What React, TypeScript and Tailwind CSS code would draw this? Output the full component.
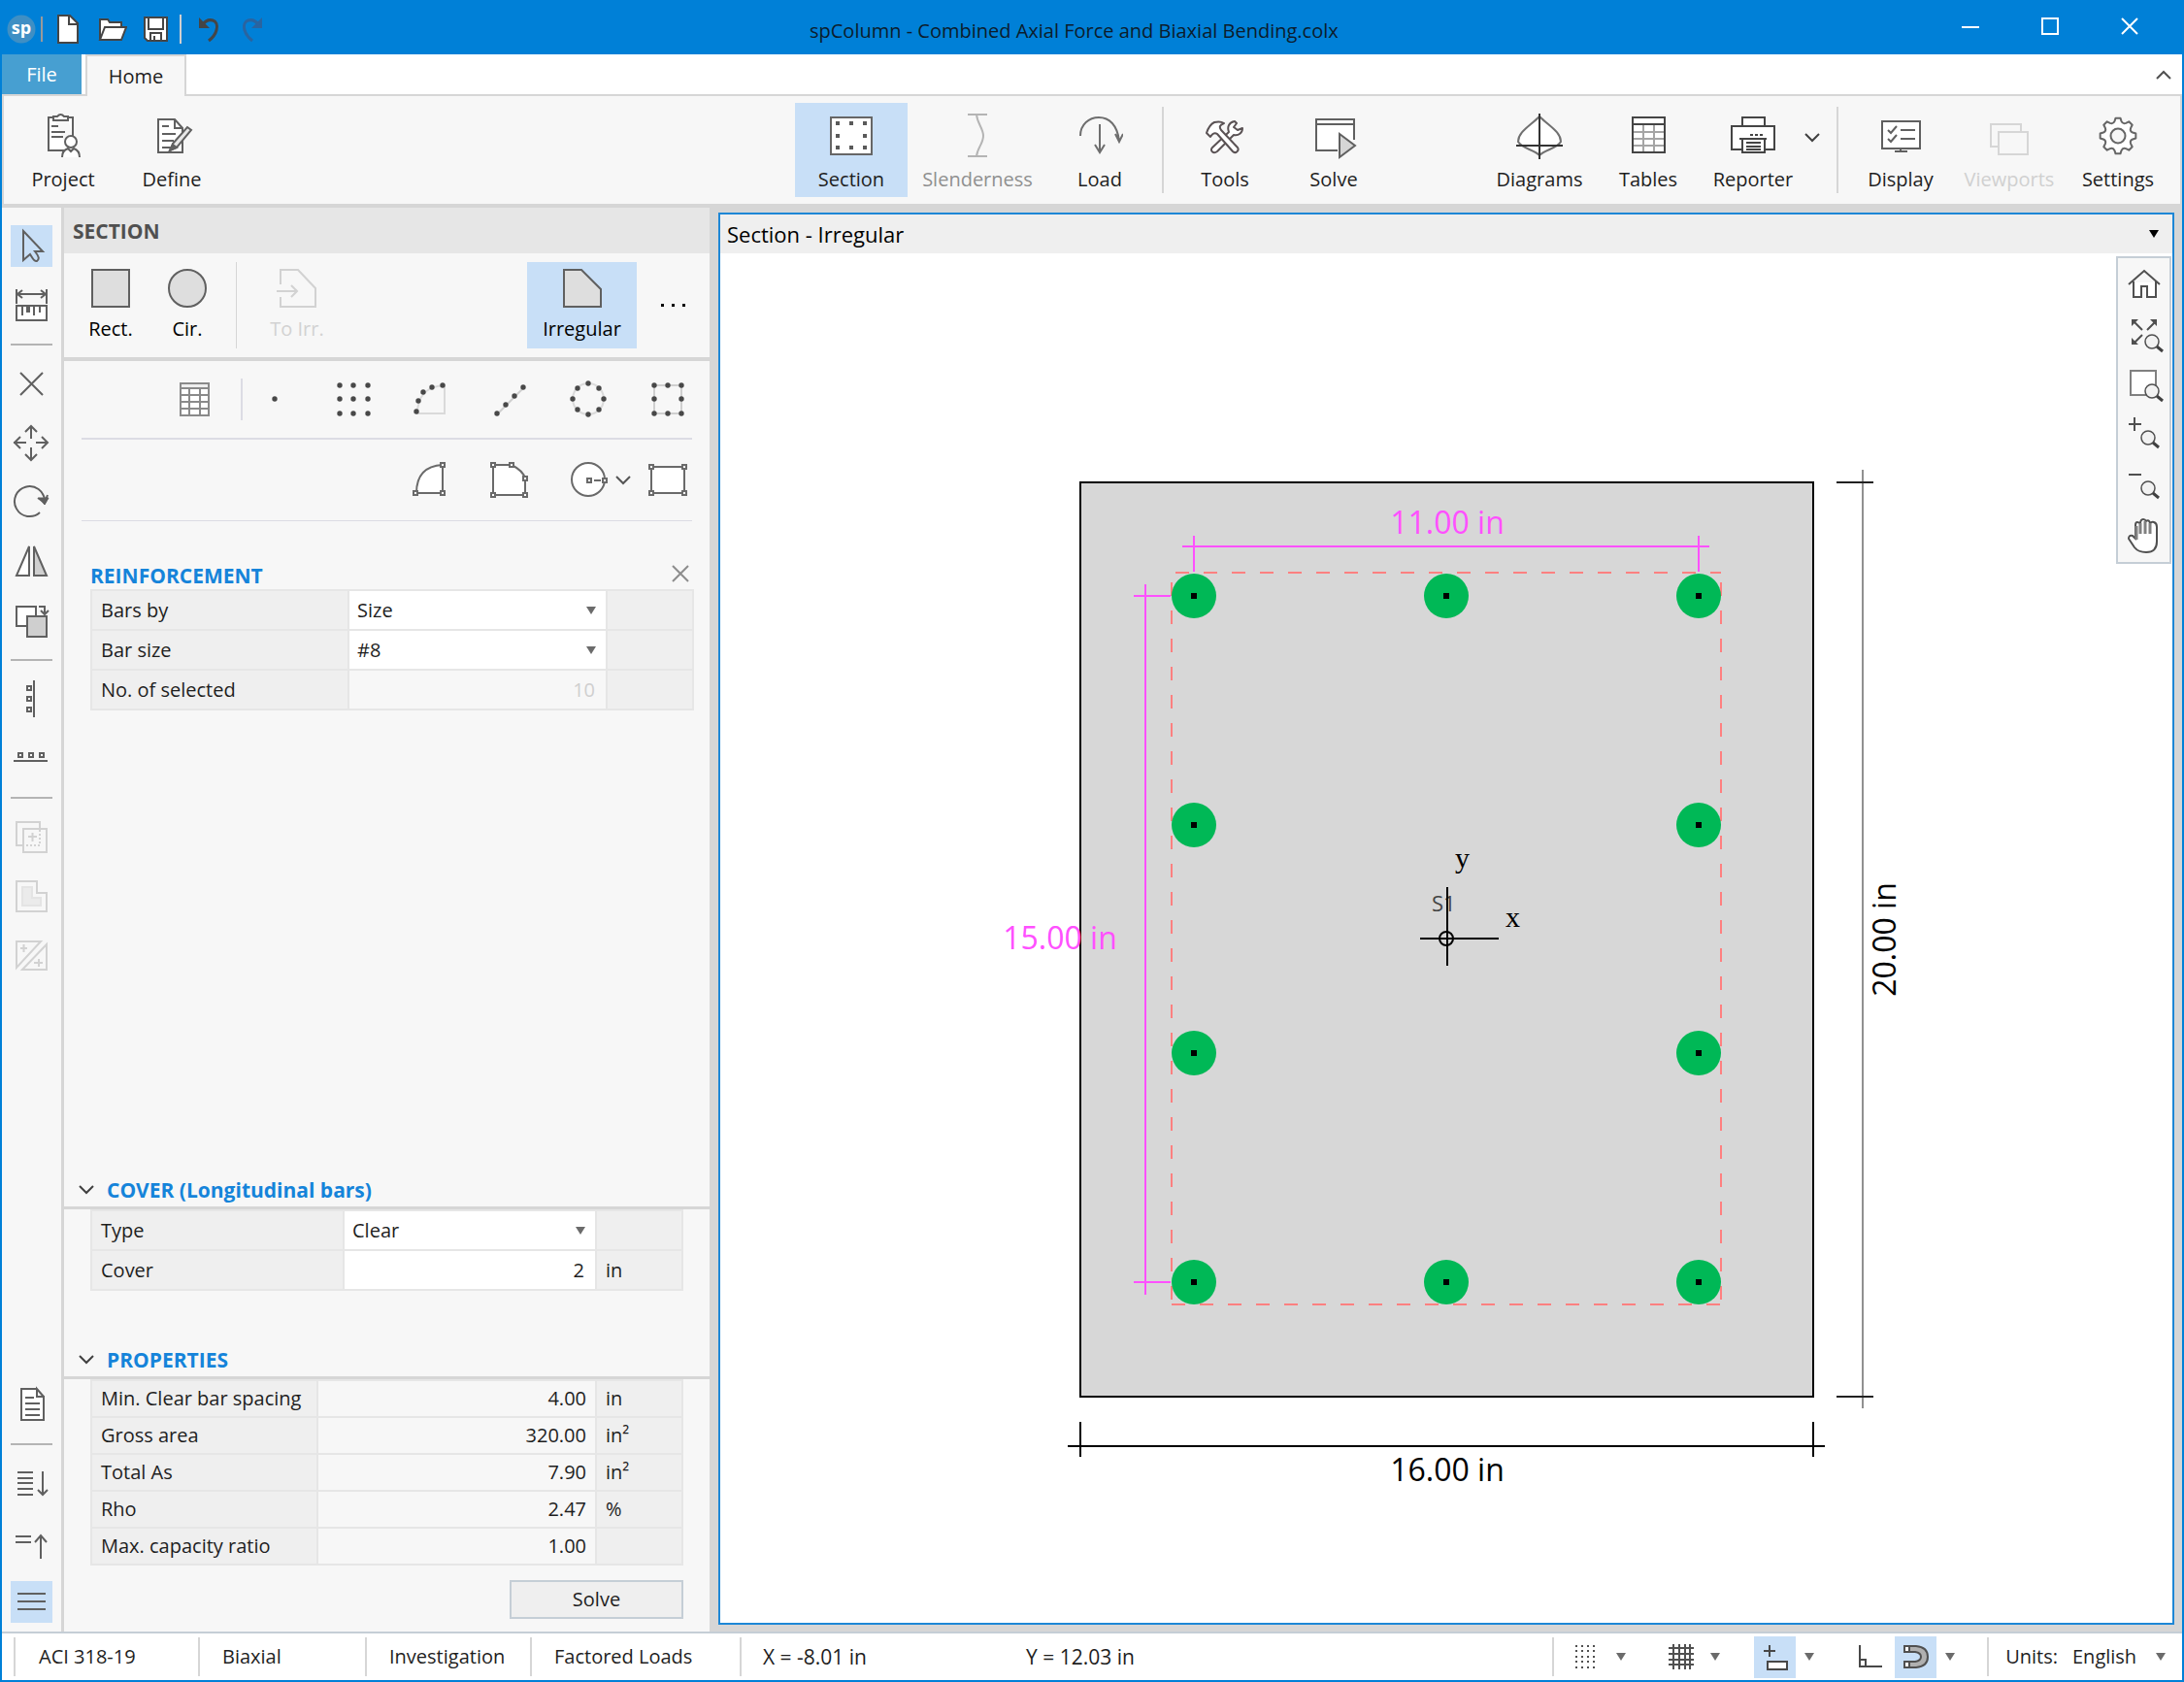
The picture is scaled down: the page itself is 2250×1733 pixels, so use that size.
import React from "react";

type IconProps = { w?: number; h?: number; c?: string; sw?: number; children: React.ReactNode };

function Ic({ w = 48, h = 48, c = "#606060", sw = 2, children }: IconProps) {
  return (
    <svg width={w} height={h} viewBox={`0 0 ${w} ${h}`} fill="none" stroke={c} strokeWidth={sw} aria-hidden="true" className="block shrink-0">
      {children}
    </svg>
  );
}

function Triangle({ c = "#6b6b6b" }: { c?: string }) {
  return (
    <svg width="12" height="8" viewBox="0 0 12 8" fill={c} aria-hidden="true" className="pointer-events-none block shrink-0">
      <path d="M1 0H11L6 8Z" />
    </svg>
  );
}

function Chevron({ c = "#404040", up = false }: { c?: string; up?: boolean }) {
  return (
    <Ic w={16} h={12} c={c}>
      {up ? <path d="M1 10L8 3L15 10" /> : <path d="M1 2L8 9L15 2" />}
    </Ic>
  );
}

const gearPath = (() => {
  const pts: string[] = [];
  const n = 8;
  const at = (r: number, a: number) => `${(24 + r * Math.cos(a)).toFixed(2)} ${(24 + r * Math.sin(a)).toFixed(2)}`;
  for (let i = 0; i < n; i++) {
    const a = (i * 2 * Math.PI) / n - Math.PI / 2;
    const s = Math.PI / n;
    pts.push(`${i === 0 ? "M" : "L"}${at(18.5, a - s * 0.34)}`);
    pts.push(`L${at(18.5, a + s * 0.34)}`);
    pts.push(`L${at(15.5, a + s * 0.58)}`);
    pts.push(`Q${at(12.8, a + s)} ${at(15.5, a + s * 1.42)}`);
  }
  return pts.join("") + "Z";
})();

/* ---------- ribbon icons ---------- */

const ProjectIcon = (
  <Ic>
    <path d="M29 39H9V5H14M29 5H34V26" fill="#fff" />
    <path d="M14 8V4H18Q21.500 0 25 4H29V8Z" fill="#fff" />
    <path d="M12 14H19M12 20H26M12 25H24" />
    <circle cx="32" cy="30" r="6" fill="#fff" />
    <path d="M23 46C23 40 26 38 29 37L32 40L35 37C38 38 41 40 41 46" fill="#fff" />
  </Ic>
);

const DefineIcon = (
  <Ic>
    <path d="M27 7H10V41H35V16Z" fill="#fff" />
    <path d="M27 7V16H35" />
    <path d="M14 14H21M14 22H28M14 29H26M14 36H24" />
    <path d="M25 32L40 15L44 18L29 36L22 39Z" fill="#e8e8e8" />
    <path d="M22 39L25 33L29 36Z" fill="#606060" />
  </Ic>
);

const SectionIcon = (
  <Ic c="#666">
    <rect x="3" y="5" width="42" height="38" fill="#fff" />
    <g fill="#5a5a5a" stroke="none">
      {[10, 24, 38].map((x) => [11, 24, 36].map((y) => (x === 24 && y === 24 ? null : <rect key={`${x}-${y}`} x={x - 2} y={y - 2} width="4" height="4" />)))}
    </g>
  </Ic>
);

const SlendernessIcon = (
  <Ic c="#b4b4b4">
    <path d="M14 2H34M14 45H34M23 2C24 12 30 16 30 24C30 32 24 36 23 45" />
  </Ic>
);

const LoadIcon = (
  <Ic c="#6e6e6e">
    <path d="M4 24C4 12 13 5 23 5C34 5 42 13 44 29M40 22L44 30L48 22M24 12V41M19 33L24 41L29 33" />
  </Ic>
);

const ToolsIcon = (
  <Ic c="#5a5254">
    <path d="M11 36L28 20C26 15 28 10 34 9L36 11L33 15L37 18L42 16C42 21 38 24 33 23L16 40C12 43 8 39 11 36Z" fill="#fff" strokeLinejoin="round" />
    <path d="M5 21C7 15 9 12 13 10C17 9 20 9 23 11C18 13 18 15 20 18L37 36C39 39 35 43 32 40L16 22C13 20 11 22 9 25Z" fill="#fff" strokeLinejoin="round" />
  </Ic>
);

const SolveIcon = (
  <Ic c="#606060">
    <path d="M28 39H6V7H45V28" fill="#fff" />
    <path d="M6 12H45M45 7V28" />
    <path d="M30 22V46L46 34Z" fill="#d6d6d6" />
  </Ic>
);

const DiagramsIcon = (
  <Ic c="#707070">
    <path d="M24 4C14 14 2 20 2 30C6 37 18 38 24 44C30 38 42 37 46 30C46 20 34 14 24 4Z" fill="#fff" />
    <path d="M24 1V48M0 34H48" stroke="#333" />
  </Ic>
);

const TablesIcon = (
  <Ic c="#454545">
    <rect x="8" y="5" width="33" height="36" fill="#fff" />
    <path d="M9 20H40M9 27H40M9 34H40M19 13V40M30 13V40" stroke="#a5a5a5" />
    <path d="M8 12H41" />
    <rect x="8" y="5" width="33" height="36" />
  </Ic>
);

const ReporterIcon = (
  <Ic c="#454545">
    <rect x="13" y="5" width="23" height="9" fill="#fff" />
    <path d="M12 38H2V14H46V38H36" fill="#fff" />
    <path d="M21 23H24M26 23H29M31 23H34M10 27H38" />
    <rect x="13" y="27" width="23" height="14" fill="#fff" />
    <path d="M17 31H32M17 35H32M17 38H32" />
  </Ic>
);

const DisplayIcon = (
  <Ic c="#606060">
    <rect x="5" y="9" width="39" height="28" fill="#fff" />
    <path d="M18 40H31M24 37V40" />
    <path d="M24 18H39M24 27H39M11 18L14 21L20 14M11 27L14 30L20 23" />
  </Ic>
);

const ViewportsIcon = (
  <Ic c="#d6d6d6">
    <path d="M13 35H5V12H36V20" />
    <rect x="13" y="20" width="30" height="23" />
  </Ic>
);

const SettingsIcon = (
  <Ic c="#666">
    <path d={gearPath} fill="#fff" strokeLinejoin="round" />
    <circle cx="24" cy="24" r="7.500" fill="#f7f7f7" />
  </Ic>
);

/* ---------- left tool strip icons (43 x 43) ---------- */

const T = ({ c, children }: { c?: string; children: React.ReactNode }) => (
  <Ic w={43} h={43} c={c}>
    {children}
  </Ic>
);

const SelectIcon = (
  <T>
    <path d="M13 6L33 27H25C29 32 30 35 27 37C24 38 22 33 20 30L13 36Z" />
  </T>
);
const MeasureIcon = (
  <T>
    <rect x="6" y="22" width="31" height="15" fill="#fff" />
    <path d="M6 5V20M37 5V20M7 10H36M12 6L7 10L12 14M31 6L36 10L31 14M12 23V32M24 23V32M30 23V29" />
    <path d="M18 23V29" strokeWidth="4" />
  </T>
);
const DeleteIcon = (
  <T>
    <path d="M10 10L33 33M33 10L10 33" />
  </T>
);
const MoveIcon = (
  <T>
    <path d="M21 4V17M15 10L21 4L27 10M21 26V39M15 33L21 39L27 33M3 21H16M10 15L4 21L10 27M26 21H38M32 15L38 21L32 27" />
  </T>
);
const RotateIcon = (
  <T>
    <path d="M30 32A15.500 15.500 0 1 1 35 20M28 17L35 22L38 14" />
    <path d="M29 17L35 24L39 17Z" fill="#606060" strokeWidth="1" />
  </T>
);
const MirrorIcon = (
  <T>
    <path d="M19 6V36H6Z" fill="#fff" />
    <path d="M24 6V36H37Z" fill="#cfcfcf" />
  </T>
);
const DuplicateIcon = (
  <T>
    <rect x="6" y="7" width="20" height="20" fill="#fff" />
    <rect x="17" y="17" width="20" height="21" fill="#cfcfcf" />
    <path d="M29 7H35V14M31 11L35 15L39 11" />
  </T>
);
const AlignVIcon = (
  <T>
    <path d="M24 2V40" />
    {[8, 19, 30].map((y) => (
      <rect key={y} x="17" y={y} width="4" height="4" fill="#fff" />
    ))}
  </T>
);
const AlignHIcon = (
  <T>
    <path d="M3 24H38" />
    {[8, 19, 30].map((x) => (
      <rect key={x} x={x} y="16" width="4" height="4" fill="#fff" />
    ))}
  </T>
);
const UnionIcon = (
  <T c="#d2d2d2">
    <path d="M12 30H6V6H30V12" />
    <rect x="13" y="13" width="24" height="24" />
    <path d="M18 21H27M22.500 17V26" />
    <path d="M30 14V30H14" strokeDasharray="2 2" />
  </T>
);
const OffsetIcon = (
  <T c="#d2d2d2">
    <path d="M6 6H27V18H37V37H6Z" />
    <path d="M12 12H22V23H31V31H12Z" fill="#ebebeb" stroke="#e4e4e4" />
  </T>
);
const SplitIcon = (
  <T c="#d2d2d2">
    <path d="M6 34V7H31ZM37 10V36H12Z" />
    <path d="M10 14H17M13.500 10V18M24 29H33M29 25V33" />
  </T>
);
const ReportIcon = (
  <T>
    <path d="M26 5H11V37H34V13H27V5L34 13" fill="#fff" />
    <path d="M15 14H24M15 20H30M15 26H30M15 32H30" />
  </T>
);
const SortDownIcon = (
  <T>
    <path d="M7 10H23M7 16H23M7 21H23M7 27H23M7 33H23M33 9V33M28 28L33 33L38 28" />
  </T>
);
const SortUpIcon = (
  <T>
    <path d="M5 15H21M5 21H21M31 14V38M25 21L31 14L37 21" />
  </T>
);
const MenuIcon = (
  <T>
    <path d="M7 13H36M7 21H36M7 29H36" />
  </T>
);

type Tool = { name: string; icon: React.ReactNode; on?: boolean; off?: boolean } | null;

const topTools: Tool[] = [
  { name: "Select", icon: SelectIcon, on: true },
  { name: "Measure", icon: MeasureIcon },
  null,
  { name: "Delete", icon: DeleteIcon },
  { name: "Move", icon: MoveIcon },
  { name: "Rotate", icon: RotateIcon },
  { name: "Mirror", icon: MirrorIcon },
  { name: "Duplicate", icon: DuplicateIcon },
  null,
  { name: "Align vertically", icon: AlignVIcon },
  { name: "Align horizontally", icon: AlignHIcon },
  null,
  { name: "Merge", icon: UnionIcon, off: true },
  { name: "Offset", icon: OffsetIcon, off: true },
  { name: "Split", icon: SplitIcon, off: true },
];

const bottomTools: Tool[] = [
  { name: "Report", icon: ReportIcon },
  null,
  { name: "Expand list", icon: SortDownIcon },
  { name: "Collapse list", icon: SortUpIcon },
  { name: "Toggle panel", icon: MenuIcon, on: true },
];

function ToolList({ tools }: { tools: Tool[] }) {
  return (
    <div className="flex flex-col items-center gap-[18px]">
      {tools.map((t, i) =>
        t ? (
          <button key={i} type="button" aria-label={t.name} disabled={t.off} className={t.on ? "bg-[#c8dff7]" : ""}>
            {t.icon}
          </button>
        ) : (
          <div key={i} className="h-[2px] w-[43px] bg-[#b4b4b4]" />
        ),
      )}
    </div>
  );
}

/* ---------- drawing tool icons (43 x 43) ---------- */

const Dots = ({ pts }: { pts: number[][] }) => (
  <g fill="#484848" stroke="none">
    {pts.map(([x, y]) => (
      <circle key={`${x}-${y}`} cx={x} cy={y} r="2.700" />
    ))}
  </g>
);

const Handles = ({ pts }: { pts: number[][] }) => (
  <g fill="#fff" strokeWidth="2">
    {pts.map(([x, y]) => (
      <rect key={`${x}-${y}`} x={x - 2} y={y - 2} width="4" height="4" />
    ))}
  </g>
);

const BarTableIcon = (
  <T c="#8a8a8a">
    <rect x="7" y="5" width="29" height="33" fill="#fff" />
    <rect x="7" y="5" width="29" height="5" fill="#eee" />
    <path d="M7 17H36M7 24H36M7 31H36M16 10V38M27 10V38" />
  </T>
);
const PointIcon = (
  <T>
    <Dots pts={[[21, 21]]} />
  </T>
);
const GridDotsIcon = (
  <T>
    <Dots pts={[7, 21, 36].flatMap((x) => [7, 21, 36].map((y) => [x, y]))} />
  </T>
);
const ArcDotsIcon = (
  <T c="#dadada">
    <path d="M6 36C6 18 16 8 34 7V36Z" />
    <Dots pts={[[5, 34], [7, 23], [12, 14], [21, 9], [32, 7]]} />
  </T>
);
const LineDotsIcon = (
  <T c="#cfcfcf">
    <path d="M8 36L35 9" />
    <Dots pts={[[7, 36], [16, 27], [25, 18], [34, 9]]} />
  </T>
);
const CircleDotsIcon = (
  <T c="#dadada">
    <circle cx="20" cy="21" r="16" />
    <Dots pts={[[20, 5], [31, 10], [36, 21], [31, 32], [20, 37], [9, 32], [4, 21], [9, 10]]} />
  </T>
);
const RectDotsIcon = (
  <T c="#cfcfcf">
    <rect x="7" y="7" width="28" height="29" />
    <Dots pts={[[7, 7], [21, 7], [35, 7], [7, 21], [35, 21], [7, 36], [21, 36], [35, 36]]} />
  </T>
);
const ArcShapeIcon = (
  <T c="#6a6a6a">
    <path d="M5 35C5 17 14 7 32 6V35Z" fill="#fff" />
    <Handles pts={[[32, 6], [4, 35], [32, 35]]} />
  </T>
);
const PolyShapeIcon = (
  <T c="#6a6a6a">
    <path d="M3 6H22Q34 12 36 20V37H3Z" fill="#fff" />
    <Handles pts={[[3, 6], [22, 6], [36, 20], [3, 37], [36, 37]]} />
  </T>
);
const CircleShapeIcon = (
  <T c="#6a6a6a">
    <circle cx="20" cy="21" r="17" fill="#fff" />
    <path d="M26 22H33" />
    <Handles pts={[[21, 22], [37, 22]]} />
  </T>
);
const RectShapeIcon = (
  <T c="#6a6a6a">
    <rect x="4" y="8" width="34" height="27" fill="#fff" />
    <Handles pts={[[4, 8], [38, 8], [4, 35], [38, 35]]} />
  </T>
);

function IconButton({ name, children }: { name: string; children: React.ReactNode }) {
  return (
    <button type="button" aria-label={name}>
      {children}
    </button>
  );
}

/* ---------- ribbon ---------- */

type RibbonProps = { label: string; icon: React.ReactNode; width?: string; on?: boolean; tone?: string };

function RibbonButton({ label, icon, width = "w-[112px]", on, tone = "text-[#1e1e1e]" }: RibbonProps) {
  return (
    <button type="button" className={`flex h-[97px] shrink-0 flex-col items-center gap-[9px] pt-[10px] ${width} ${tone} ${on ? "bg-[#c8dff7]" : ""}`}>
      {icon}
      <span className="leading-6">{label}</span>
    </button>
  );
}

const Rule = () => <div className="h-[89px] w-[2px] shrink-0 bg-[#d6d6d6]" />;

function TitleBar() {
  return (
    <header className="relative flex h-14 items-start justify-between bg-[#0080d7]">
      <div className="flex h-[60px] items-center pl-[7px]">
        <svg width="30" height="30" viewBox="0 0 30 30" aria-hidden="true">
          <circle cx="15" cy="15" r="14.500" fill="#3f8fc4" />
          <text x="15" y="20" textAnchor="middle" fill="#fff" fontWeight="700" fontSize="18" fontFamily="Open Sans, sans-serif">sp</text>
        </svg>
        <div className="ml-[5px] h-[26px] w-[2px] bg-[#9a9a9a]" />
        <div className="ml-[13px] flex items-center gap-[16px]">
          <IconButton name="New">
            <Ic w={28} h={32} c="#454545">
              <path d="M3 2H15L23 10V30H3Z" fill="#fff" />
              <path d="M14 2V11H23" />
            </Ic>
          </IconButton>
          <IconButton name="Open">
            <Ic w={30} h={32} c="#454545">
              <path d="M2 26V6H10L12 9H24V14" fill="#fff" />
              <path d="M7 14H29L24 27H2Z" fill="#fff" />
            </Ic>
          </IconButton>
          <IconButton name="Save">
            <Ic w={28} h={32} c="#454545">
              <path d="M2 4H25V28H5L2 25Z" fill="#fff" />
              <path d="M6 4V16H21V4M8 28V20H19V28M12 23V28" />
            </Ic>
          </IconButton>
        </div>
        <div className="ml-[10px] h-[30px] w-[2px] bg-[#d0d0d0]" />
        <div className="ml-[16px] flex gap-[18px]">
          <IconButton name="Undo">
            <Ic w={26} h={28} c="#454545" sw={3}>
              <path d="M2 2V13H13Z" fill="#454545" stroke="none" />
              <path d="M5 10C12 1 23 4 20 15C19 19 16 23 12 26" />
            </Ic>
          </IconButton>
          <IconButton name="Redo">
            <Ic w={26} h={28} c="#2a64a0" sw={3}>
              <path d="M23 2V13H12Z" fill="#2a64a0" stroke="none" />
              <path d="M20 10C13 1 2 4 5 15C6 19 9 23 13 26" />
            </Ic>
          </IconButton>
        </div>
      </div>
      <h1 className="absolute left-1/2 top-[20px] -translate-x-[291px] whitespace-nowrap leading-6 text-[#0c1c2c]">
        spColumn - Combined Axial Force and Biaxial Bending.colx
      </h1>
      <div className="flex h-[54px] items-center gap-[62px] pr-[46px]">
        <IconButton name="Minimize">
          <Ic w={20} h={20} c="#fff">
            <path d="M1 11H19" />
          </Ic>
        </IconButton>
        <IconButton name="Maximize">
          <Ic w={20} h={20} c="#fff">
            <rect x="2" y="2" width="16" height="16" />
          </Ic>
        </IconButton>
        <IconButton name="Close">
          <Ic w={20} h={20} c="#fff">
            <path d="M2 2L18 18M18 2L2 18" />
          </Ic>
        </IconButton>
      </div>
    </header>
  );
}

function Ribbon() {
  return (
    <>
      <nav className="flex h-[43px] items-stretch bg-white">
        <div className="w-[86px] border-b-2 border-[#d6d6d6]">
          <button type="button" className="h-full w-[82px] bg-[#479fd1] text-white">File</button>
        </div>
        <button type="button" className="w-[104px] border-2 border-b-0 border-[#d6d6d6] bg-[#f7f7f7] text-[#1e1e1e]">Home</button>
        <div className="flex flex-1 items-center justify-end border-b-2 border-[#d6d6d6] pr-[11px]">
          <IconButton name="Collapse ribbon">
            <Chevron up c="#505050" />
          </IconButton>
        </div>
      </nav>
      <div className="flex h-[111px] items-center justify-between border-x-2 border-[#d6d6d6] bg-[#f7f7f7]">
        <div className="flex w-[815px] pl-[5px]">
          <RibbonButton label="Project" icon={ProjectIcon} />
          <RibbonButton label="Define" icon={DefineIcon} />
        </div>
        <div className="flex items-center">
          <RibbonButton label="Section" icon={SectionIcon} width="w-[116px]" on />
          <RibbonButton label="Slenderness" icon={SlendernessIcon} width="w-[144px]" tone="text-[#909090]" />
          <RibbonButton label="Load" icon={LoadIcon} width="w-[108px]" />
          <div className="pl-[10px]">
            <Rule />
          </div>
          <div className="w-[7px]" />
          <RibbonButton label="Tools" icon={ToolsIcon} />
          <RibbonButton label="Solve" icon={SolveIcon} />
        </div>
        <div className="flex flex-1 items-center justify-end pr-[8px]">
          <RibbonButton label="Diagrams" icon={DiagramsIcon} />
          <RibbonButton label="Tables" icon={TablesIcon} />
          <RibbonButton label="Reporter" icon={ReporterIcon} width="w-[104px]" />
          <button type="button" aria-label="Reporter options" className="flex h-[97px] w-[18px] justify-center pt-[30px]">
            <Chevron />
          </button>
          <div className="w-[16px]" />
          <Rule />
          <div className="w-[8px]" />
          <RibbonButton label="Display" icon={DisplayIcon} />
          <RibbonButton label="Viewports" icon={ViewportsIcon} tone="text-[#d0d0d0]" />
          <RibbonButton label="Settings" icon={SettingsIcon} />
        </div>
      </div>
    </>
  );
}

/* ---------- section panel ---------- */

function ShapeButton({ label, width, on, off, children }: { label: string; width: string; on?: boolean; off?: boolean; children: React.ReactNode }) {
  return (
    <button type="button" disabled={off} className={`flex h-[89px] shrink-0 flex-col items-center gap-[9px] pt-[6px] ${width} ${on ? "bg-[#c8dff7]" : ""} ${off ? "text-[#d2d2d2]" : "text-black"}`}>
      <Ic w={42} h={42} c={off ? "#d2d2d2" : "#606060"}>
        {children}
      </Ic>
      <span className="leading-6">{label}</span>
    </button>
  );
}

function Dropdown({ id, value }: { id: string; value: string }) {
  return (
    <div className="relative flex h-full items-center">
      <select id={id} defaultValue={value} className="h-full w-full appearance-none bg-white pl-[8px] text-[#1e1e1e] outline-none">
        <option>{value}</option>
      </select>
      <span className="pointer-events-none absolute right-[9px]">
        <Triangle />
      </span>
    </div>
  );
}

const cell = "border-2 border-[#e6e6e6] p-0";
const head = "border-2 border-[#e6e6e6] bg-[#efefef] px-0 pl-[9px] text-left font-normal text-[#1e1e1e]";
const unitCell = "border-2 border-[#e6e6e6] bg-[#efefef] p-0 pl-[9px] text-[#1e1e1e]";

const properties = [
  { label: "Min. Clear bar spacing", value: "4.00", unit: "in" },
  { label: "Gross area", value: "320.00", unit: "in²" },
  { label: "Total As", value: "7.90", unit: "in²" },
  { label: "Rho", value: "2.47", unit: "%" },
  { label: "Max. capacity ratio", value: "1.00", unit: "" },
];

function GroupTitle({ children }: { children: React.ReactNode }) {
  return (
    <div className="flex h-[38px] items-center border-b-[3px] border-[#d6d6d6] pl-[15px]">
      <button type="button" className="flex items-center gap-[13px] text-[21px] font-bold text-[#1584da]">
        <Chevron />
        <span>{children}</span>
      </button>
    </div>
  );
}

function SectionPanel() {
  return (
    <aside className="flex w-[665px] shrink-0 flex-col bg-[#f7f7f7]">
      <h2 className="flex h-[47px] items-center bg-[#e6e6e6] pl-[9px] text-[21px] font-bold text-[#505050]">SECTION</h2>
      <div className="flex h-[111px] items-center border-b-4 border-[#d6d6d6] pl-[8px]">
        <ShapeButton label="Rect." width="w-[80px]">
          <rect x="2" y="2" width="38" height="38" fill="#dedede" />
        </ShapeButton>
        <ShapeButton label="Cir." width="w-[78px]">
          <circle cx="21" cy="21" r="19" fill="#dedede" />
        </ShapeButton>
        <div className="ml-[11px] h-[89px] w-px bg-[#d6d6d6]" />
        <div className="w-[22px]" />
        <ShapeButton label="To Irr." width="w-[80px]" off>
          <path d="M4 17V2H22L40 21V40H4V30M0 24H21M15 18L21 24L15 30" />
        </ShapeButton>
        <div className="flex-1" />
        <ShapeButton label="Irregular" width="w-[113px]" on>
          <path d="M2 2H20L40 22V40H2Z" fill="#dedede" />
        </ShapeButton>
        <button type="button" aria-label="More shapes" className="flex h-[89px] w-[75px] items-center justify-center gap-[8px]">
          <span className="h-[3px] w-[3px] bg-black" />
          <span className="h-[3px] w-[3px] bg-black" />
          <span className="h-[3px] w-[3px] bg-black" />
        </button>
      </div>

      <div className="ml-[18px] mr-[18px] flex h-[81px] items-center justify-end border-b-2 border-[#dcdce4] pr-[3px]">
        <IconButton name="Bar table">{BarTableIcon}</IconButton>
        <div className="ml-[26px] mr-[12px] h-[43px] w-[2px] bg-[#dcdce4]" />
        <div className="flex gap-[38px]">
          <IconButton name="Single bar">{PointIcon}</IconButton>
          <IconButton name="Grid of bars">{GridDotsIcon}</IconButton>
          <IconButton name="Arc of bars">{ArcDotsIcon}</IconButton>
          <IconButton name="Line of bars">{LineDotsIcon}</IconButton>
          <IconButton name="Circle of bars">{CircleDotsIcon}</IconButton>
          <IconButton name="Rectangle of bars">{RectDotsIcon}</IconButton>
        </div>
      </div>
      <div className="ml-[18px] mr-[18px] flex h-[84px] items-center justify-end border-b border-[#dcdce4] pr-[3px]">
        <div className="flex gap-[38px]">
          <IconButton name="Arc shape">{ArcShapeIcon}</IconButton>
          <IconButton name="Polygon shape">{PolyShapeIcon}</IconButton>
          <IconButton name="Circle shape">{CircleShapeIcon}</IconButton>
        </div>
        <button type="button" aria-label="Circle options" className="mx-[3px] flex w-[20px] justify-center">
          <Chevron c="#555" />
        </button>
        <div className="w-[12px]" />
        <IconButton name="Rectangle shape">{RectShapeIcon}</IconButton>
      </div>

      <div className="ml-[27px] mr-[16px] mt-[44px]">
        <div className="flex h-[26px] items-start justify-between pr-[5px]">
          <h3 className="text-[21px] font-bold text-[#1584da]">REINFORCEMENT</h3>
          <IconButton name="Close reinforcement">
            <Ic w={18} h={20} c="#8c8c8c">
              <path d="M1 2L17 18M17 2L1 18" />
            </Ic>
          </IconButton>
        </div>
        <table className="w-full table-fixed border-collapse">
          <colgroup>
            <col className="w-[265px]" />
            <col className="w-[266px]" />
            <col />
          </colgroup>
          <tbody>
            <tr className="h-[41px]">
              <th scope="row" className={head}><label htmlFor="bars-by">Bars by</label></th>
              <td className={`${cell} h-[41px]`}><Dropdown id="bars-by" value="Size" /></td>
              <td className={unitCell} />
            </tr>
            <tr className="h-[41px]">
              <th scope="row" className={head}><label htmlFor="bar-size">Bar size</label></th>
              <td className={`${cell} h-[41px]`}><Dropdown id="bar-size" value="#8" /></td>
              <td className={unitCell} />
            </tr>
            <tr className="h-[41px]">
              <th scope="row" className={head}><label htmlFor="selected-count">No. of selected</label></th>
              <td className={cell}>
                <input id="selected-count" readOnly value="10" className="w-full bg-transparent pr-[11px] text-right text-[#cfcfcf] outline-none" />
              </td>
              <td className={unitCell} />
            </tr>
          </tbody>
        </table>
      </div>

      <div className="flex-1" />

      <section>
        <GroupTitle>COVER (Longitudinal bars)</GroupTitle>
        <div className="ml-[27px] mr-[27px]">
          <table className="w-full table-fixed border-collapse">
            <colgroup>
              <col className="w-[260px]" />
              <col className="w-[260px]" />
              <col />
            </colgroup>
            <tbody>
              <tr className="h-[41px]">
                <th scope="row" className={head}><label htmlFor="cover-type">Type</label></th>
                <td className={`${cell} h-[41px]`}><Dropdown id="cover-type" value="Clear" /></td>
                <td className={unitCell} />
              </tr>
              <tr className="h-[41px]">
                <th scope="row" className={head}><label htmlFor="cover-value">Cover</label></th>
                <td className={`${cell} h-[41px] bg-white`}>
                  <input id="cover-value" defaultValue="2" className="w-full bg-white pr-[11px] text-right text-[#1e1e1e] outline-none" />
                </td>
                <td className={unitCell}>in</td>
              </tr>
            </tbody>
          </table>
        </div>
      </section>

      <section className="mt-[53px]">
        <GroupTitle>PROPERTIES</GroupTitle>
        <div className="ml-[27px] mr-[27px]">
          <table className="w-full table-fixed border-collapse">
            <colgroup>
              <col className="w-[233px]" />
              <col className="w-[287px]" />
              <col />
            </colgroup>
            <tbody>
              {properties.map((p) => (
                <tr key={p.label} className="h-[38px]">
                  <th scope="row" className={`${head} whitespace-nowrap`}>{p.label}</th>
                  <td className={`${cell} text-right`}><span className="pr-[9px] text-[#1e1e1e]">{p.value}</span></td>
                  <td className={unitCell}>{p.unit}</td>
                </tr>
              ))}
            </tbody>
          </table>
        </div>
        <div className="flex justify-end pb-[13px] pr-[27px] pt-[15px]">
          <button type="button" className="h-10 w-[179px] border-2 border-[#c5ced6] bg-[#efefef] text-[#1e1e1e]">Solve</button>
        </div>
      </section>
    </aside>
  );
}

/* ---------- section view ---------- */

const bars = [
  [1230, 614], [1490, 614], [1750, 614],
  [1230, 850], [1750, 850],
  [1230, 1085], [1750, 1085],
  [1230, 1321], [1490, 1321], [1750, 1321],
];

function SectionDrawing() {
  return (
    <svg viewBox="742 261 1496 1411" className="absolute inset-0 h-full w-full" fontFamily="Open Sans, Noto Sans, sans-serif" role="img" aria-label="Irregular column section">
      <rect x="1113" y="497" width="755" height="942" fill="#d7d7d7" stroke="#000" strokeWidth="2" />
      <g stroke="#ff8080" strokeWidth="2" strokeDasharray="14 15">
        <path d="M1211 590H1773M1207 600V1344M1773 600V1344M1207 1344H1773" />
      </g>
      {bars.map(([x, y]) => (
        <g key={`${x}-${y}`}>
          <circle cx={x} cy={y} r="23" fill="#00b856" />
          <rect x={x - 3} y={y - 3} width="6" height="6" fill="#000" />
        </g>
      ))}
      <g stroke="#ff50ff" strokeWidth="2">
        <path d="M1218 563H1761M1230 552V589M1750 552V589" />
        <path d="M1180 602V1334M1168 614H1206M1168 1321H1206" />
      </g>
      <g fill="#ff50ff" fontSize="32">
        <text x="1491" y="550" textAnchor="middle">11.00 in</text>
        <text x="1092" y="978" textAnchor="middle">15.00 in</text>
      </g>
      <g stroke="#222" strokeWidth="2">
        <path d="M1919 484V1451" strokeWidth="1" />
        <path d="M1892 497H1930M1892 1439H1930" />
        <path d="M1100 1490H1880M1113 1465V1501M1868 1465V1501" stroke="#000" />
      </g>
      <g fill="#000" fontSize="32">
        <text x="1491" y="1526" textAnchor="middle">16.00 in</text>
        <text transform="translate(1953 968) rotate(-90)" textAnchor="middle">20.00 in</text>
      </g>
      <text x="1475" y="939" fontSize="22" fill="#444">S1</text>
      <g stroke="#000" strokeWidth="2" fill="none">
        <path d="M1463 967H1544M1491 914V995" />
        <circle cx="1490" cy="967" r="7" />
      </g>
      <g fontFamily="Liberation Serif, serif" fontSize="30" fill="#000">
        <text x="1499" y="894">y</text>
        <text x="1551" y="955">x</text>
      </g>
    </svg>
  );
}

const Lens = ({ x, y }: { x: number; y: number }) => (
  <g>
    <circle cx={x} cy={y} r="7" fill="#f2f2f2" stroke="#505050" strokeWidth="1.500" />
    <path d={`M${x + 5} ${y + 5}l6 5`} stroke="#404040" strokeWidth="3" />
  </g>
);

const Z = ({ children }: { children: React.ReactNode }) => (
  <Ic w={40} h={40} c="#505050" sw={2}>
    {children}
  </Ic>
);

const viewTools = [
  {
    name: "Home view",
    icon: (
      <Z>
        <path d="M8 19V34H18V23H23V34H32V19" fill="#fff" stroke="none" />
        <path d="M4 21L20 7L36 21M9 18V34H17V23H23V34H32V18" />
      </Z>
    ),
  },
  {
    name: "Zoom extents",
    icon: (
      <Z>
        <path d="M9 7L18 16M32 7L23 16M9 30L18 21" />
        <path d="M7 5H14L7 12ZM33 5H26L33 12ZM7 31H14L7 24Z" fill="#505050" stroke="none" />
        <Lens x={28} y={28} />
      </Z>
    ),
  },
  {
    name: "Zoom window",
    icon: (
      <Z>
        <rect x="6" y="6" width="26" height="25" fill="#fff" stroke="#808080" />
        <Lens x={28} y={27} />
      </Z>
    ),
  },
  {
    name: "Zoom in",
    icon: (
      <Z>
        <path d="M4 9H17M10 2V16" />
        <Lens x={24} y={23} />
      </Z>
    ),
  },
  {
    name: "Zoom out",
    icon: (
      <Z>
        <path d="M4 9H17" />
        <Lens x={24} y={23} />
      </Z>
    ),
  },
  {
    name: "Pan",
    icon: (
      <Z>
        <path d="M11 22V9Q11 6 13 6Q15 6 16 8Q16 3 19 3Q21 3 22 5Q25 3 26 7Q28 5 30 6Q33 7 33 11V26Q33 37 22 37Q14 37 10 32L4 23Q4 19 8 20L12 24" fill="#fff" />
        <path d="M16 7V18M21 5V18M26 7V18M12 10V24" strokeWidth="3" stroke="#808080" />
      </Z>
    ),
  },
];

function SectionView() {
  return (
    <main className="mb-[7px] ml-[9px] mr-[8px] mt-[5px] flex flex-1 flex-col border-2 border-[#1e87d6] bg-white">
      <div className="flex h-10 items-center justify-between bg-[#efefef] pl-[7px] pr-[13px]">
        <h2 className="text-[22px] text-black">Section - Irregular</h2>
        <IconButton name="View options">
          <Triangle c="#000" />
        </IconButton>
      </div>
      <div className="relative flex-1">
        <SectionDrawing />
        <div className="absolute right-px top-[3px] flex w-[57px] flex-col items-center gap-[12px] border-2 border-[#c5ced6] bg-[#f7f7f7] pb-[7px] pt-[6px]">
          {viewTools.map((t) => (
            <IconButton key={t.name} name={t.name}>
              {t.icon}
            </IconButton>
          ))}
        </div>
      </div>
    </main>
  );
}

/* ---------- status bar ---------- */

const StatusRule = () => <div className="h-10 w-[2px] shrink-0 bg-[#d6d6d6]" />;

function StatusTool({ name, on, children }: { name: string; on?: boolean; children: React.ReactNode }) {
  return (
    <button type="button" aria-label={name} className={`flex h-[43px] w-[43px] items-center justify-center ${on ? "bg-[#c8dff7]" : ""}`}>
      {children}
    </button>
  );
}

function StatusBar() {
  return (
    <footer className="flex h-[50px] items-center justify-between border-t-2 border-[#c5ced6] bg-white text-[#1e1e1e]">
      <div className="flex items-center pl-[12px]">
        <StatusRule />
        <span className="w-[188px] pl-[24px]">ACI 318-19</span>
        <StatusRule />
        <span className="w-[170px] pl-[23px]">Biaxial</span>
        <StatusRule />
        <span className="w-[168px] pl-[23px]">Investigation</span>
        <StatusRule />
        <span className="w-[214px] pl-[23px]">Factored Loads</span>
        <StatusRule />
        <span className="w-[271px] pl-[22px] text-[21px]">X = -8.01 in</span>
        <span className="pl-[22px] text-[21px]">Y = 12.03 in</span>
      </div>
      <div className="flex items-center pr-[16px]">
        <StatusRule />
        <div className="w-[12px]" />
        <StatusTool name="Grid dots">
          <Ic w={26} h={26} c="#505050">
            <path d="M1 2H25M1 7H25M1 13H25M1 18H25M1 24H25" strokeDasharray="2 4" />
          </Ic>
        </StatusTool>
        <IconButton name="Grid dots options"><span className="flex w-[28px] justify-center"><Triangle /></span></IconButton>
        <div className="w-[26px]" />
        <StatusTool name="Grid lines">
          <Ic w={26} h={26} c="#505050">
            <path d="M0 4H26M0 10H26M0 16H26M0 21H26M5 0V26M11 0V26M17 0V26M22 0V26" />
          </Ic>
        </StatusTool>
        <IconButton name="Grid line options"><span className="flex w-[28px] justify-center"><Triangle /></span></IconButton>
        <div className="w-[26px]" />
        <StatusTool name="Dynamic input" on>
          <Ic w={28} h={28} c="#484848">
            <path d="M2 8H14M8 2V14" />
            <rect x="6" y="19" width="20" height="8" fill="#fff" />
          </Ic>
        </StatusTool>
        <IconButton name="Dynamic input options"><span className="flex w-[28px] justify-center"><Triangle /></span></IconButton>
        <div className="w-[26px]" />
        <StatusTool name="Orthogonal mode">
          <Ic w={26} h={26} c="#484848">
            <path d="M3 1V23H26M3 16H9V23" />
          </Ic>
        </StatusTool>
        <div className="w-[5px]" />
        <StatusTool name="Snap" on>
          <Ic w={28} h={26} c="#505050">
            <path d="M2 2H14Q26 3 26 13Q26 23 14 24H2V18H13Q19 17 19 13Q19 9 13 8H2Z" fill="#b0b0b0" />
            <path d="M2 2H7V8H2ZM2 18H7V24H2Z" fill="#fff" />
          </Ic>
        </StatusTool>
        <IconButton name="Snap options"><span className="flex w-[28px] justify-center"><Triangle /></span></IconButton>
        <div className="w-[24px]" />
        <StatusRule />
        <label htmlFor="units" className="pl-[17px] pr-[15px]">Units:</label>
        <div className="relative flex items-center">
          <select id="units" defaultValue="English" className="w-[97px] appearance-none bg-transparent outline-none">
            <option>English</option>
          </select>
          <span className="pointer-events-none absolute right-0">
            <Triangle />
          </span>
        </div>
      </div>
    </footer>
  );
}

export default function App() {
  return (
    <div className="flex h-screen flex-col bg-[#0080d7] font-['Open_Sans','Noto_Sans',sans-serif] text-[20px] leading-6">
      <TitleBar />
      <div className="flex min-h-0 flex-1 flex-col px-[2px] pb-[2px]">
        <Ribbon />
        <div className="flex min-h-0 flex-1 bg-[#d6d6d6] pt-[4px]">
          <div className="mr-[3px] flex w-[61px] shrink-0 flex-col justify-between bg-[#f7f7f7] pb-[9px] pt-[18px]">
            <ToolList tools={topTools} />
            <ToolList tools={bottomTools} />
          </div>
          <SectionPanel />
          <SectionView />
        </div>
        <StatusBar />
      </div>
    </div>
  );
}
